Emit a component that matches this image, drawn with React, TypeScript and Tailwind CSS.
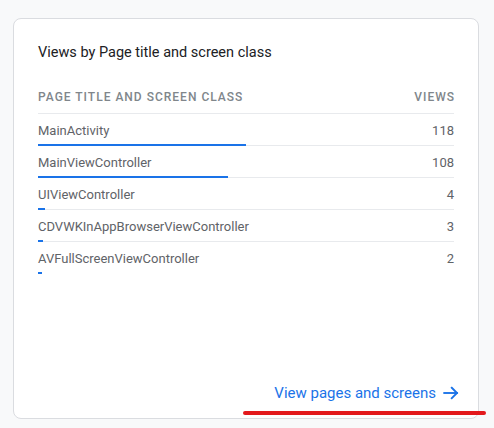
import React from 'react';

interface Row {
  name: string;
  views: number;
}

const rows: Row[] = [
  { name: 'MainActivity', views: 118 },
  { name: 'MainViewController', views: 108 },
  { name: 'UIViewController', views: 4 },
  { name: 'CDVWKInAppBrowserViewController', views: 3 },
  { name: 'AVFullScreenViewController', views: 2 },
];

const max = Math.max(...rows.map(r => r.views));

const App: React.FC = () => {
  return (
    <div className="relative w-[494px] h-[428px] bg-[#f8f9fa] pt-[18px] pl-[13px] font-['Roboto',sans-serif]">
      <div className="w-[466px] h-[401px] bg-white border border-[#dadce0] rounded-lg flex flex-col px-6 pt-[24px] pb-[15px]">
        <h2 className="text-[14.5px] leading-5 text-[#202124]">
          Views by Page title and screen class
        </h2>

        <div className="mt-[26px] flex justify-between items-center pb-2 border-b border-[#e8eaed] text-[12px] leading-4 font-medium tracking-[1px] text-[#80868b]">
          <span>PAGE TITLE AND SCREEN CLASS</span>
          <span className="-mr-px">VIEWS</span>
        </div>

        {rows.map((r, i) => (
          <div
            key={r.name}
            className={`flex flex-col ${i < rows.length - 1 ? 'border-b border-[#e8eaed]' : ''}`}
          >
            <div className="h-[30px] flex justify-between items-center pt-[3px] text-[13px] leading-5 text-[#5f6368]">
              <span>{r.name}</span>
              <span>{r.views}</span>
            </div>
            <div className="h-[2px] -mb-px relative z-10">
              <div className="h-full bg-[#1a73e8]" style={{ width: `${(r.views / max) * 50}%` }} />
            </div>
          </div>
        ))}

        <div className="mt-auto flex justify-end -mr-[6px]">
          <a className="flex items-center gap-[6px] text-[15px] leading-5 text-[#1a73e8] cursor-pointer">
            <span>View pages and screens</span>
            <svg width="18" height="18" viewBox="0 0 24 24" fill="none" stroke="currentColor" strokeWidth="2.5" strokeLinecap="square">
              <path d="M3 12h17" />
              <path d="M13 5l7 7-7 7" />
            </svg>
          </a>
        </div>
      </div>

      <div className="absolute left-[243px] top-[411px] w-[243px] h-1 rounded-full bg-[#e3191c]" />
    </div>
  );
};

export default App;
